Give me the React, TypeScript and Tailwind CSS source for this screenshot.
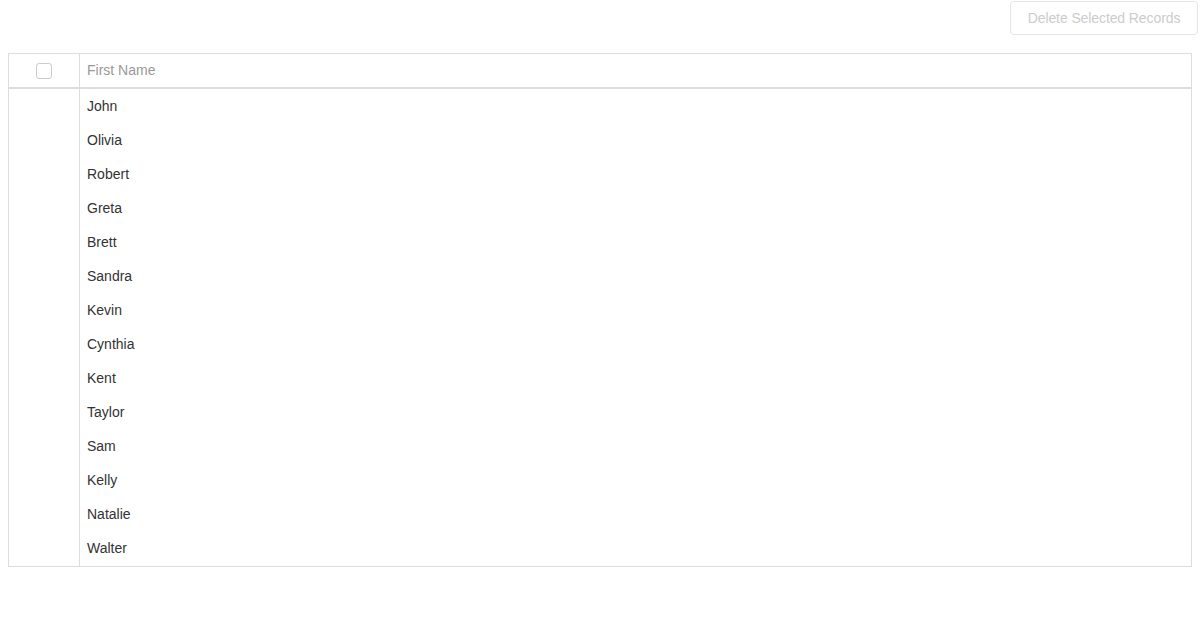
const names = [
  'John',
  'Olivia',
  'Robert',
  'Greta',
  'Brett',
  'Sandra',
  'Kevin',
  'Cynthia',
  'Kent',
  'Taylor',
  'Sam',
  'Kelly',
  'Natalie',
  'Walter',
]

export default function App() {
  return (
    <div className="w-[1200px] h-[630px] bg-white font-['Liberation_Sans',Arial,sans-serif] text-[14px]">
      <div className="flex justify-end pt-[1px] pr-[2px]">
        <button
          disabled
          className="h-[34px] w-[188px] rounded-[4px] border border-[#e6e6e6] bg-white text-[#cccccc] text-[14px] tracking-[-0.1px]"
        >
          Delete Selected Records
        </button>
      </div>
      <div className="mx-[8px] mt-[18px] border border-[#dddddd]">
        <div className="flex h-[35px] border-b-2 border-[#dddddd]">
          <div className="w-[71px] flex items-center justify-center border-r border-[#dddddd]">
            <span className="block w-[16px] h-[16px] rounded-[3px] border border-[#cccccc] bg-white" />
          </div>
          <div className="flex-1 flex items-center pl-[7px] text-[#999999]">First Name</div>
        </div>
        <div className="flex">
          <div className="w-[71px] border-r border-[#dddddd]" />
          <div className="flex-1 pb-[1px]">
            {names.map((n) => (
              <div key={n} className="h-[34px] flex items-center pl-[7px] text-[#333333]">
                {n}
              </div>
            ))}
          </div>
        </div>
      </div>
    </div>
  )
}
